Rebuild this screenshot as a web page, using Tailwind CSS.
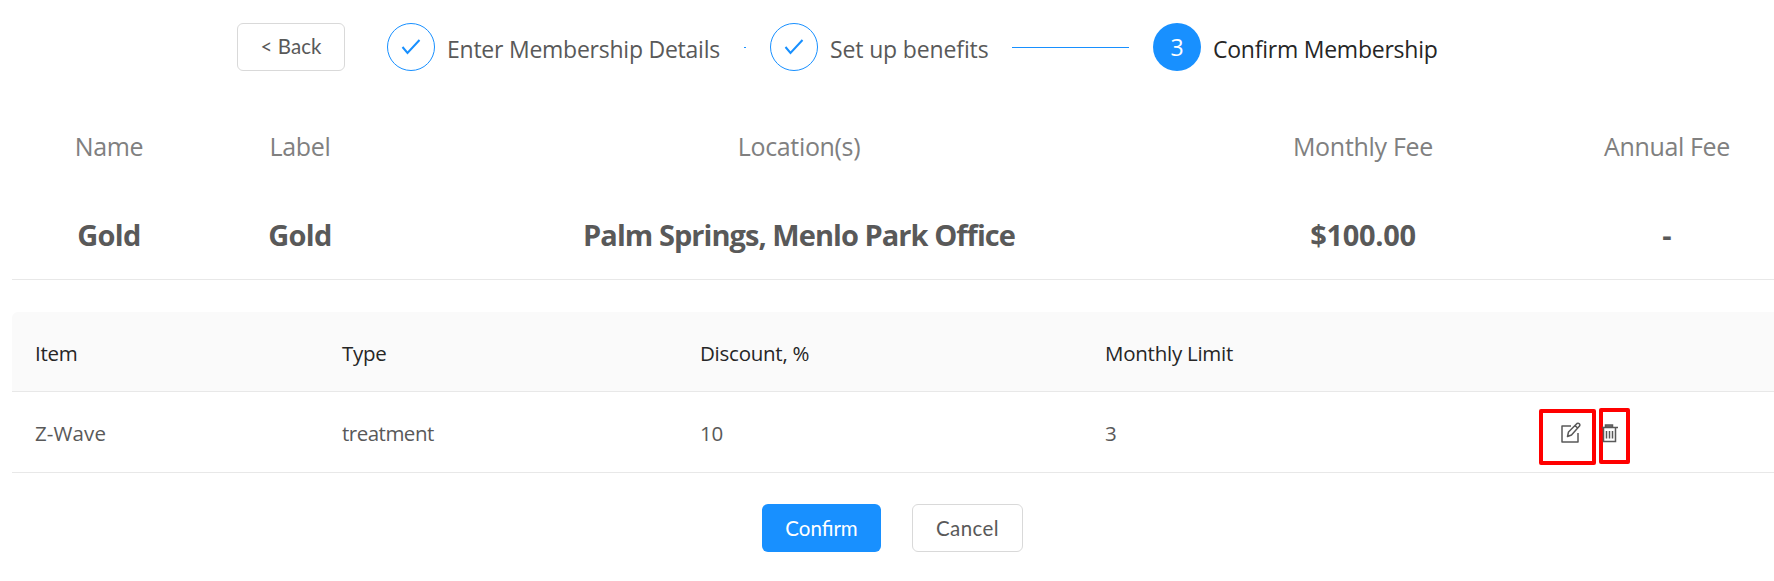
<!DOCTYPE html>
<html lang="en">
<head>
    <meta charset="UTF-8" />
    <meta name="viewport" content="width=device-width, initial-scale=1.0"/>
    <title>Confirm Membership</title>
    <script src="https://cdn.jsdelivr.net/npm/@tailwindcss/browser@4"></script>
</head>
<body class="bg-white text-[#595959] font-['Open_Sans',sans-serif] h-screen overflow-hidden">

<!-- Steps -->
<header class="flex items-center pt-[23px] pl-[237px] whitespace-nowrap">
    <button class="w-[108px] h-12 pb-0.5 border border-[#d9d9d9] rounded-md font-[Lato,sans-serif] text-[20.5px] tracking-[0.1px]">&lt; Back</button>
    <div class="flex items-center ml-[42px] w-[383px]">
        <div class="size-12 shrink-0 rounded-full border border-[#1890ff] flex items-center justify-center">
            <svg class="size-[22px]" viewBox="0 0 22 22" fill="none" stroke="#1890ff" stroke-width="2"><path d="M2.5 11l5 6L19.5 4"/></svg>
        </div>
        <span class="ml-3 w-[297px] text-[23px] tracking-[-0.24px] leading-8 pt-[3px]">Enter Membership Details</span>
        <span class="w-[2px] h-px bg-[#1890ff]"></span>
    </div>
    <div class="flex items-center w-[383px]">
        <div class="size-12 shrink-0 rounded-full border border-[#1890ff] flex items-center justify-center">
            <svg class="size-[22px]" viewBox="0 0 22 22" fill="none" stroke="#1890ff" stroke-width="2"><path d="M2.5 11l5 6L19.5 4"/></svg>
        </div>
        <span class="ml-3 w-[182px] text-[23px] tracking-[-0.14px] leading-8 pt-[3px]">Set up benefits</span>
        <span class="w-[117px] h-px bg-[#1890ff]"></span>
    </div>
    <div class="flex items-center">
        <div class="size-12 shrink-0 rounded-full bg-[#1890ff] text-white text-[23px] flex items-center justify-center">3</div>
        <span class="ml-3 text-[23px] tracking-[-0.24px] leading-8 pt-[3px] text-[#262626]">Confirm Membership</span>
    </div>
</header>

<!-- Membership summary -->
<section class="ml-3 w-[1800px] h-[209px] pt-[52px] border-b border-[#e8e8e8] grid grid-cols-[194px_188px_810px_318px_290px] grid-rows-[46px_110px] text-center whitespace-nowrap">
    <div class="text-[25px] leading-[46px] tracking-[-0.35px] text-[#808080]">Name</div>
    <div class="text-[25px] leading-[46px] tracking-[-0.35px] text-[#808080]">Label</div>
    <div class="text-[25px] leading-[46px] tracking-[-0.35px] text-[#808080]">Location(s)</div>
    <div class="text-[25px] leading-[46px] tracking-[-0.3px] text-[#808080]">Monthly Fee</div>
    <div class="text-[25px] leading-[46px] tracking-[-0.35px] text-[#808080]">Annual Fee</div>
    <div class="pt-[43px] text-[29px] leading-[46px] tracking-[-0.7px] font-bold">Gold</div>
    <div class="pt-[43px] text-[29px] leading-[46px] tracking-[-0.7px] font-bold">Gold</div>
    <div class="pt-[43px] text-[29px] leading-[46px] tracking-[-0.95px] font-bold">Palm Springs, Menlo Park Office</div>
    <div class="pt-[43px] text-[29px] leading-[46px] tracking-[-0.3px] font-bold">$100.00</div>
    <div class="pt-[43px] text-[29px] leading-[46px] font-bold">-</div>
</section>

<!-- Benefits -->
<table class="ml-3 mt-8 w-[1800px] table-fixed border-separate border-spacing-0 text-left text-[20.5px] tracking-[-0.25px]">
    <thead class="text-[#262626]">
    <tr class="h-20">
        <th class="w-[307px] pl-[23px] pt-[3px] bg-[#fafafa] border-b border-[#e8e8e8] rounded-tl-md font-normal">Item</th>
        <th class="w-[358px] pl-[23px] pt-[3px] bg-[#fafafa] border-b border-[#e8e8e8] font-normal">Type</th>
        <th class="w-[405px] pl-[23px] pt-[3px] bg-[#fafafa] border-b border-[#e8e8e8] font-normal">Discount, %</th>
        <th class="w-[455px] pl-[23px] pt-[3px] bg-[#fafafa] border-b border-[#e8e8e8] font-normal">Monthly Limit</th>
        <th class="bg-[#fafafa] border-b border-[#e8e8e8]"></th>
    </tr>
    </thead>
    <tbody>
    <tr class="h-[81px]">
        <td class="pl-[23px] pt-[3px] border-b border-[#e8e8e8] tracking-[0.1px]">Z-Wave</td>
        <td class="pl-[23px] pt-[3px] border-b border-[#e8e8e8] tracking-[-0.5px]">treatment</td>
        <td class="pl-[23px] pt-[3px] border-b border-[#e8e8e8]">10</td>
        <td class="pl-[23px] pt-[3px] border-b border-[#e8e8e8]">3</td>
        <td class="border-b border-[#e8e8e8]">
            <div class="flex items-start gap-[3px] pl-[2px] pt-[8px]">
                <span class="w-[57px] h-[56px] mt-px border-4 border-[#ff0000] rounded-xs flex items-center justify-center">
                    <svg class="size-[22px] ml-1.5 mb-2" viewBox="0 0 22 22" fill="none" stroke="#595959" stroke-width="1.5" stroke-linejoin="round"><path d="M11 4H2v16h16v-9"/><path d="M7.500 14.500l1-4.500L17 1.500q1.300-.7 2.300.3t.2 2.300L11.500 13zM15 3.500l2.800 2.800"/></svg>
                </span>
                <span class="w-[31px] h-[56px] border-4 border-[#ff0000] rounded-xs flex items-center">
                    <svg class="w-4 h-5 -ml-px mb-1.5" viewBox="0 0 16 20" fill="none" stroke="#595959" stroke-width="1.5"><path d="M0 4.500h16M1.500 4.500v14h12v-14M4.500 8v7.500M7.500 8v7.500M10.500 8v7.500"/><path d="M3.500 2h7v2h-7z" fill="#8c8c8c"/></svg>
                </span>
            </div>
        </td>
    </tr>
    </tbody>
</table>

<!-- Actions -->
<footer class="flex gap-[31px] pl-[762px] pt-[31px] font-[Lato,sans-serif] text-[20.5px]">
    <button class="w-[119px] h-12 rounded-md bg-[#1890ff] text-white">Confirm</button>
    <button class="w-[111px] h-12 rounded-md border border-[#d9d9d9] tracking-[0.4px]">Cancel</button>
</footer>

</body>
</html>
